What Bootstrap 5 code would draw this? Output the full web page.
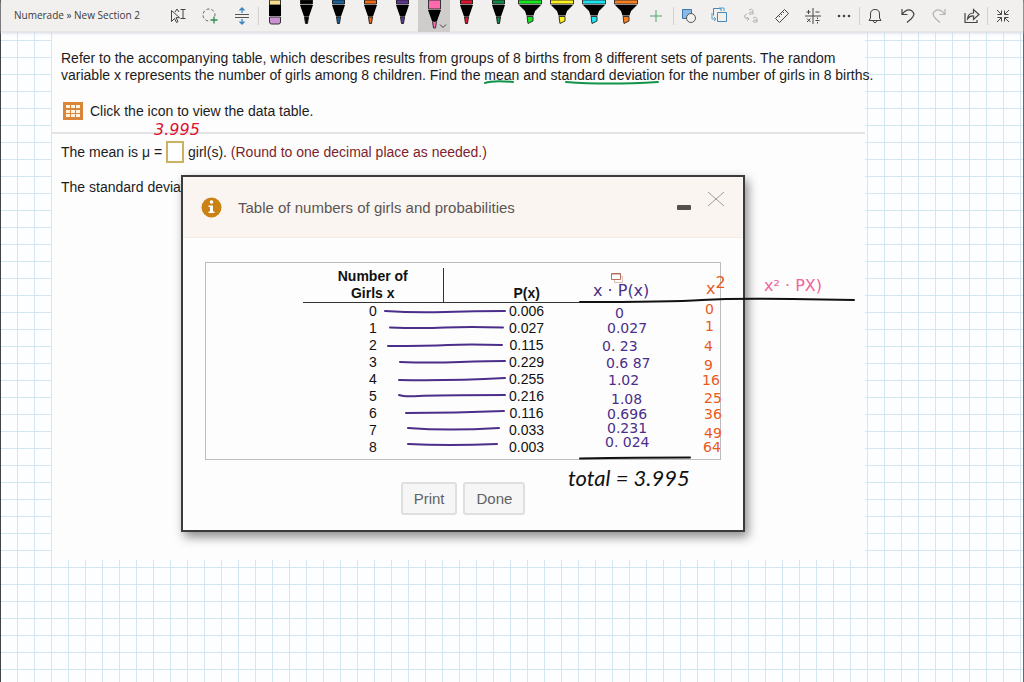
<!DOCTYPE html>
<html lang="en">
<head>
<meta charset="utf-8">
<meta name="viewport" content="width=device-width, initial-scale=1">
<title>Numerade » New Section 2</title>
<link href="https://cdn.jsdelivr.net/npm/bootstrap@5.3.0/dist/css/bootstrap.min.css" rel="stylesheet">
<style>
body{font-family:"Liberation Sans",Arial,sans-serif;font-size:14px;line-height:17px;color:#1c1c1c;background:#fdfeff;overflow-x:hidden}
.app{min-height:100vh;border-left:1px solid #444;border-right:1px solid #667}
.toolbar{height:32px;background:#f2f0ef;border-bottom:1px solid #e6e6ea;box-shadow:0 1px 3px #d5d5e0;position:relative;z-index:3}
.crumb{font-family:"Open Sans",sans-serif;font-size:10px;color:#3a3a3a;width:161px;padding-left:13px}
.tool{width:32px;height:32px;padding:0;border:0;background:none;display:flex;align-items:center;justify-content:center;flex:none}
.tool svg{display:block}
.tool.narrow{width:31px}
.tool.chosen{background:#cfcdcc;position:relative}
.group{display:flex;position:relative}
.group + .group::before{content:"";position:absolute;left:0;top:7px;height:18px;border-left:1px solid #d3d1d0}
.paper{flex:1;position:relative;background-image:linear-gradient(to right,#d3e7f1 1px,transparent 1px),linear-gradient(to bottom,#d3e7f1 1px,transparent 1px);background-size:17px 17px;background-position:16px 8px}
.sheet{width:100%;max-width:813px;min-height:528px;margin-left:51px;background:#fdfdfe;position:relative}
.question{padding:0 9px}
.question p{margin:0}
.intro{padding-top:18px}
.data-link{gap:7px;padding:18px 0 0 2px}
.rule-line{border-top:2px solid #e3e3e5;margin:12px 0 7px}
.mean-box{width:18px;height:22px;border:2px solid #cdb163;border-radius:0;padding:0;background:#fff}
.hint{color:#7c1f2c}
.popup{position:absolute;left:129px;top:143px;width:564px;background:#fdfdfd;border:2px solid #3b3b3d;box-shadow:3px 5px 10px rgba(0,0,0,.45)}
.popup-head{background:#faf5f1;height:61px;padding:0 18px;color:#5a5654;font-size:15px;border-bottom:1px solid #f3ebe4}
.plain{background:none;border:0;padding:0;line-height:0}
.frame{margin:24px 22px 0 22px;border:1px solid #bcbcbc;height:198px;padding-top:5px}
.prob{width:307px;border-collapse:collapse;color:#111;text-align:center}
.prob th,.prob td{padding:0}
.prob thead th{vertical-align:bottom;border-bottom:1px solid #333;height:34px}
.prob th:first-child{width:141px}
.prob thead th:first-child{border-right:1px solid #333}
.actions{gap:6px;padding:22px 0 15px}
.push{background:#f6f6f6;border:2px solid #dfdfdf;border-radius:3px;color:#626262;font-size:15px;line-height:17px;padding:6px 11px}
.ink{position:absolute;left:-1px;top:0;width:1024px;height:650px;pointer-events:none;overflow:visible}
.ink path{fill:none;stroke-linecap:round;stroke-linejoin:round;stroke-width:2}
.ink text{font-family:"DejaVu Sans",sans-serif;font-size:14px}
.ink .large{font-size:16px}
.ink .script{font-family:"Lato",sans-serif;font-style:italic;font-size:22px}
.violet path{stroke:#4b2e8a}.violet text{fill:#4b2e8a}
.orange text{fill:#e85a1c}
</style>
<script src="https://cdn.jsdelivr.net/npm/bootstrap@5.3.0/dist/js/bootstrap.bundle.min.js"></script>
</head>
<body>
<svg width="0" height="0" class="position-absolute" aria-hidden="true">
  <defs>
    <symbol id="pen" viewBox="0 0 32 32"><path d="M10.500 0h12v4h-12z" fill="currentColor" stroke="#222"/><path d="M10 5h13l-4 11.500h-5z" fill="#000"/><path d="M14.500 17h4l-1 6.500h-2z" fill="currentColor" stroke="#222"/></symbol>
    <symbol id="marker" viewBox="0 0 32 32"><path d="M4.500 0h23v4h-23z" fill="currentColor" stroke="#333"/><path d="M5 5h22l-6 6-1.500 4.500h-7L11 11z" fill="#000"/><path d="M13 16.500h6v4.500l-5 2.500z" fill="currentColor" stroke="#333"/></symbol>
  </defs>
</svg>
<div class="app d-flex flex-column">
  <header class="toolbar d-flex align-items-center">
    <div class="crumb text-nowrap">Numerade » New Section 2</div>
    <div class="group">
      <button class="tool" aria-label="Select or type"><svg width="18" height="18" fill="none" stroke="#444"><path d="M2.500 3.500v11l3-3 2 4 1.500-.8-2-4h3.500zM11.500 2.500h5M14 2.500v9M11.500 11.500h5M6 5l2-3 2 3"/></svg></button>
      <button class="tool" aria-label="Lasso select"><svg width="18" height="18" fill="none"><circle cx="8" cy="8" r="6" stroke="#666" stroke-dasharray="3 2"/><path d="M9 13h8M13 9v8" stroke="#f2f0ef" stroke-width="3"/><path d="M9.500 13h7M13 9.500v7" stroke="#2c8a50" stroke-width="1.300"/></svg></button>
      <button class="tool" aria-label="Insert space"><svg width="16" height="18" fill="none"><path d="M1 7.500h14M1 10.500h14" stroke="#555"/><path d="M8 6V1M5.500 3.500 8 1l2.500 2.500M8 12v5M5.500 14.500 8 17l2.500-2.500" stroke="#3684c0" stroke-width="1.300"/></svg></button>
    </div>
    <div class="group">
      <button class="tool" aria-label="Eraser"><svg width="32" height="32"><path d="M11.500 0h11v5h-11z" fill="#f7dc8b" stroke="#333"/><path d="M11 5h12v11H11z"/><path d="M11.500 17h11v5q0 2-2 2h-7q-2 0-2-2z" fill="#ca92d2" stroke="#333"/></svg></button>
      <button class="tool" aria-label="Black pen" style="color:#000"><svg width="32" height="32"><use href="#pen"/></svg></button>
      <button class="tool" aria-label="Blue pen" style="color:#17629c"><svg width="32" height="32"><use href="#pen"/></svg></button>
      <button class="tool" aria-label="Orange pen" style="color:#f26a14"><svg width="32" height="32"><use href="#pen"/></svg></button>
      <button class="tool" aria-label="Violet pen" style="color:#603694"><svg width="32" height="32"><use href="#pen"/></svg></button>
      <button class="tool chosen" aria-label="Pink pen" style="color:#ff69ad"><svg width="32" height="32"><path d="M10.500 0h12v9h-12z" fill="currentColor" stroke="#333"/><path d="M10 10h13l-4 11h-5z" fill="#000"/><path d="M14.500 21.500h4l-1 6.500h-2z" fill="currentColor" stroke="#333"/><path d="m22 24.500 3 3 3-3" fill="none" stroke="#444"/></svg></button>
      <button class="tool" aria-label="Red pen" style="color:#e8112d"><svg width="32" height="32"><use href="#pen"/></svg></button>
      <button class="tool" aria-label="Green pen" style="color:#0d8a43"><svg width="32" height="32"><use href="#pen"/></svg></button>
      <button class="tool" aria-label="Green highlighter" style="color:#12e81c"><svg width="32" height="32"><use href="#marker"/></svg></button>
      <button class="tool" aria-label="Yellow highlighter" style="color:#fff01a"><svg width="32" height="32"><use href="#marker"/></svg></button>
      <button class="tool" aria-label="Cyan highlighter" style="color:#19e5f5"><svg width="32" height="32"><use href="#marker"/></svg></button>
      <button class="tool" aria-label="Orange highlighter" style="color:#fa7d1e"><svg width="32" height="32"><use href="#marker"/></svg></button>
      <button class="tool" style="width:28px" aria-label="Add pen"><svg width="14" height="14"><path d="M1 7h12M7 1v12" stroke="#4fa36c"/></svg></button>
    </div>
    <div class="group ms-auto">
      <button class="tool narrow" aria-label="Shapes"><svg width="16" height="16"><path d="M1.500 1.500h9v9h-9z" fill="#8ab9e5" stroke="#3f77ac"/><circle cx="10" cy="10" r="4.500" fill="#f2f0ef" stroke="#555"/></svg></button>
      <button class="tool narrow" aria-label="Ink to shape"><svg width="17" height="17" fill="none"><path d="M10 4V1.500H2.500v7M6.500 5.500h9v9h-9z" stroke="#4689b8"/><path d="M1 6v6h4M3 10l2 2-2 2M8 1h5v3" stroke="#56a2ca"/></svg></button>
      <button class="tool narrow" aria-label="Ink to text" disabled><svg width="16" height="18" fill="none" stroke="#b5b3b2"><path d="M6 3q3-2 4 .5v4M10 5q-4-.5-4 1.500 2 2 4-.5M10 11q3-2 4 .5v4M14 13q-4-.5-4 1.500 2 2 4-.5M4 7q-4 1-2 4l4 1M4 10l2 2-2 2"/></svg></button>
      <button class="tool narrow" aria-label="Ruler"><svg width="16" height="16" fill="none" stroke="#444"><path d="m1.500 10.500 9-9 4 4-9 9zM4.500 7.500 6 9M6.500 5.500 8 7M8.500 3.500 10 5"/></svg></button>
      <button class="tool narrow" aria-label="Maths"><svg width="16" height="16" fill="none" stroke="#444"><path d="M0 8h16M8 0v16M1.500 4h4M3.500 2v4M10.500 4h4M2 10.500l3.500 3.500M5.500 10.500 2 14M10.500 12.500h4M12.500 9.500v1.500M12.500 14v1.500"/></svg></button>
      <button class="tool narrow" aria-label="More"><svg width="14" height="4" fill="#444"><circle cx="2" cy="2" r="1.300"/><circle cx="7" cy="2" r="1.300"/><circle cx="12" cy="2" r="1.300"/></svg></button>
    </div>
    <div class="group">
      <button class="tool" aria-label="Notifications"><svg width="14" height="16" fill="none" stroke="#444"><path d="M1 12.500h12l-1.500-2.500V6q0-4.500-4.500-4.500T2.500 6v4zM5 13q2 3.500 4 0"/></svg></button>
      <button class="tool" aria-label="Undo"><svg width="15" height="17" fill="none" stroke="#444" stroke-width="1.200"><path d="M2 2v5.500h5.500M2 7.500C5 3 9 1.500 12 4s2 5-1 8l-4 3.500"/></svg></button>
      <button class="tool" aria-label="Redo" disabled><svg width="15" height="17" fill="none" stroke="#b5b3b2" stroke-width="1.200"><path d="M13 2v5.500H7.500M13 7.500C10 3 6 1.500 3 4s-2 5 1 8l4 3.500"/></svg></button>
      <button class="tool" aria-label="Share"><svg width="17" height="16" fill="none" stroke="#444" stroke-width="1.200"><path d="M2 5v9.500h12V12M4.500 11Q5 5 10.500 5V1.500L16 6.500l-5.500 5V8Q7 7.500 4.500 11z"/></svg></button>
    </div>
    <div class="group me-1">
      <button class="tool" aria-label="Exit full screen"><svg width="14" height="14" fill="none" stroke="#444"><path d="m1 1 4 4M1.500 5.500h4v-4M13 1 9 5M12.500 5.500h-4v-4M1 13l4-4M1.500 8.500h4v4M13 13 9 9M12.500 8.500h-4v4"/></svg></button>
    </div>
  </header>

  <main class="paper">
    <section class="sheet">
      <div class="question">
        <p class="intro text-nowrap">Refer to the accompanying table, which describes results from groups of 8 births from 8 different sets of parents. The random<br>variable x represents the number of girls among 8 children. Find the mean and standard deviation for the number of girls in 8 births.</p>
        <div class="data-link d-flex align-items-center">
          <button class="plain" aria-label="View the data table"><svg width="20" height="18"><path fill="#d9863a" d="M0 0h20v18H0z"/><path fill="#fff3e2" d="M3 3h4v3H3zM8 3h4v3H8zM13 3h4v3h-4zM3 8h4v3H3zM8 8h4v3H8zM13 8h4v3h-4zM3 12h4v3H3zM8 12h4v3H8zM13 12h4v3h-4z"/></svg></button>
          <span>Click the icon to view the data table.</span>
        </div>
      </div>
      <hr class="rule-line opacity-100">
      <div class="question">
        <div class="d-flex align-items-center gap-1 pb-3">
          <label for="mean">The mean is μ =</label>
          <input id="mean" class="mean-box" type="text">
          <span>girl(s). <span class="hint">(Round to one decimal place as needed.)</span></span>
        </div>
        <p>The standard deviat</p>
      </div>

      <div class="popup" role="dialog" aria-labelledby="popup-title">
        <div class="popup-head d-flex align-items-center">
          <svg width="21" height="21" class="me-3"><circle cx="10.500" cy="10.500" r="10" fill="#c98213"/><circle cx="10.500" cy="5" r="1.800" fill="#fff"/><path d="M7.500 8.500H12v6h1.500V16h-6v-1.500H9V10H7.500z" fill="#fff"/></svg>
          <span id="popup-title">Table of numbers of girls and probabilities</span>
          <button class="plain ms-auto me-3" aria-label="Minimise"><svg width="14" height="5"><rect width="14" height="5" rx="1" fill="#55504e"/></svg></button>
          <button class="plain pb-3" aria-label="Close"><svg width="18" height="16" stroke="#a09c9a" fill="none"><path d="m1 1 16 14M17 1 1 15"/></svg></button>
        </div>
        <div class="frame d-flex justify-content-center align-items-start">
          <table class="prob">
            <thead><tr><th>Number of<br>Girls x</th><th>P(x)</th></tr></thead>
            <tbody>
              <tr><td>0</td><td>0.006</td></tr>
              <tr><td>1</td><td>0.027</td></tr>
              <tr><td>2</td><td>0.115</td></tr>
              <tr><td>3</td><td>0.229</td></tr>
              <tr><td>4</td><td>0.255</td></tr>
              <tr><td>5</td><td>0.216</td></tr>
              <tr><td>6</td><td>0.116</td></tr>
              <tr><td>7</td><td>0.033</td></tr>
              <tr><td>8</td><td>0.003</td></tr>
            </tbody>
          </table>
          <button class="plain pt-1" aria-label="Open in a new window"><svg width="14" height="12" fill="none"><path d="M4.500 4.500h8v6h-8z" stroke="#dcbab0"/><path d="M1.500 1.500h9v6h-9z" stroke="#b5705f" fill="#fff"/><path d="M1 2h10" stroke="#b5705f"/></svg></button>
        </div>
        <div class="actions d-flex justify-content-center">
          <button class="push">Print</button>
          <button class="push">Done</button>
        </div>
      </div>
    </section>

    <!-- Pen strokes and written notes on top of the page -->
    <svg class="ink" viewBox="0 32 1024 650">
      <g stroke="#119447"><path d="M485 83q8-3 28-1"/><path d="M566 82q40 3 92 0"/></g>
      <g fill="#de1230"><text class="large" x="154" y="135" font-style="italic">3.995</text></g>
      <g class="violet">
        <path d="M385 311q30 2 60 1t60-1"/>
        <path d="M390 327.500q30 1 55 0t58 0"/>
        <path d="M388 346q40 0 60-1t54 0"/>
        <path d="M400 362q30 1 60 0t45-1"/>
        <path d="M399 380q50 1 106-2"/>
        <path d="M399 395q5 2 20 1t86-1"/>
        <path d="M406 413q50 0 98-2"/>
        <path d="M408 428q40 3 91 0"/>
        <path d="M408 444q40 2 89 0"/>
        <text class="large" x="593" y="296">x · P(x)</text>
        <text x="615" y="318">0</text>
        <text x="607" y="333">0.027</text>
        <text x="602" y="351">0. 23</text>
        <text x="606" y="368">0.6 87</text>
        <text x="608" y="385">1.02</text>
        <text x="611" y="404">1.08</text>
        <text x="607" y="419">0.696</text>
        <text x="607" y="433">0.231</text>
        <text x="605" y="447">0. 024</text>
      </g>
      <g class="orange">
        <text class="large" x="706" y="294">x<tspan dy="-6">2</tspan></text>
        <text x="705" y="314">0</text>
        <text x="705" y="331">1</text>
        <text x="704" y="351">4</text>
        <text x="704" y="370">9</text>
        <text x="702" y="385">16</text>
        <text x="704" y="403">25</text>
        <text x="704" y="419">36</text>
        <text x="704" y="438">49</text>
        <text x="703" y="452">64</text>
      </g>
      <g fill="#f0669a"><text class="large" x="764" y="291">x² · PX)</text></g>
      <g stroke="#111"><path d="M580 302q90 0 122-2t90-1 62 1"/><path d="M580 458.500q60-1 110-1"/></g>
      <g fill="#111"><text class="script" x="568" y="486">total  = 3.995</text></g>
    </svg>
  </main>
</div>
</body>
</html>
